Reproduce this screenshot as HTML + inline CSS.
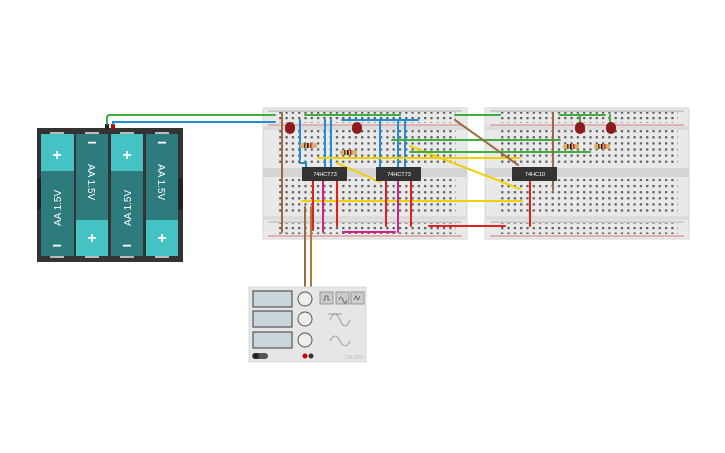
<!DOCTYPE html>
<html><head><meta charset="utf-8"><style>
html,body{margin:0;padding:0;background:#fff;width:725px;height:453px;overflow:hidden}
text{font-family:"Liberation Sans",sans-serif}
</style></head><body>
<svg width="725" height="453" viewBox="0 0 725 453" xmlns="http://www.w3.org/2000/svg">
<defs>
<pattern id="h" x="0" y="0" width="6.3" height="6.1" patternUnits="userSpaceOnUse"><rect x="2" y="2" width="2.2" height="2.2" fill="#5a5a5a"/></pattern>
<pattern id="hr" x="0" y="0" width="6.3" height="5.5" patternUnits="userSpaceOnUse"><rect x="2" y="1.5" width="2.2" height="2.2" fill="#5a5a5a"/></pattern>
</defs>

<rect x="37" y="128" width="146" height="134" fill="#333"/>
<rect x="37" y="178" width="5" height="32" rx="3" fill="#222"/>
<rect x="178" y="178" width="5" height="32" rx="3" fill="#222"/>
<g>
<rect x="41" y="134" width="33" height="122" fill="#2e7b7e"/><rect x="41" y="134" width="33" height="37" fill="#45c2c3"/>
<rect x="76" y="134" width="32" height="122" fill="#2e7b7e"/><rect x="76" y="220" width="32" height="36" fill="#45c2c3"/>
<rect x="111" y="134" width="32" height="122" fill="#2e7b7e"/><rect x="111" y="134" width="32" height="37" fill="#45c2c3"/>
<rect x="146" y="134" width="32" height="122" fill="#2e7b7e"/><rect x="146" y="220" width="32" height="36" fill="#45c2c3"/>
</g>
<g fill="#bbb"><rect x="50" y="132" width="14" height="2"/><rect x="85" y="132" width="14" height="2"/><rect x="120" y="132" width="14" height="2"/><rect x="155" y="132" width="14" height="2"/>
<rect x="50" y="256" width="14" height="2"/><rect x="85" y="256" width="14" height="2"/><rect x="120" y="256" width="14" height="2"/><rect x="155" y="256" width="14" height="2"/></g>
<g fill="#fff" font-size="16" font-weight="bold" text-anchor="middle">
<text x="57" y="160">+</text><text x="57" y="251">−</text>
<text x="92" y="148">−</text><text x="92" y="243">+</text>
<text x="127" y="160">+</text><text x="127" y="251">−</text>
<text x="162" y="148">−</text><text x="162" y="243">+</text>
</g>
<g fill="#fff" font-size="10">
<text transform="translate(61,226) rotate(-90)">AA 1.5V</text>
<text transform="translate(88,164) rotate(90)">AA 1.5V</text>
<text transform="translate(131,226) rotate(-90)">AA 1.5V</text>
<text transform="translate(158,164) rotate(90)">AA 1.5V</text>
</g>
<rect x="105" y="124" width="4" height="5" fill="#222"/><rect x="111" y="124" width="4" height="5" fill="#c00"/>

<g id="bb">
<rect x="263" y="108" width="204" height="131" fill="#e9e9e9" stroke="#d6d6d6"/>
<rect x="263" y="126" width="204" height="4" fill="#dcdcdc"/>
<rect x="263" y="168" width="204" height="9" fill="#d4d4d4"/>
<rect x="263" y="216" width="204" height="4" fill="#dcdcdc"/>
<line x1="268" y1="111" x2="462" y2="111" stroke="#999" stroke-width="0.8"/>
<line x1="268" y1="125" x2="462" y2="125" stroke="#c55" stroke-width="0.8"/>
<line x1="268" y1="222" x2="462" y2="222" stroke="#999" stroke-width="0.8"/>
<line x1="268" y1="236" x2="462" y2="236" stroke="#c55" stroke-width="0.8"/>
<rect x="276" y="112" width="180" height="11" fill="url(#hr)"/>
<rect x="276" y="130" width="180" height="36" fill="url(#h)"/>
<rect x="276" y="179" width="180" height="36" fill="url(#h)"/>
<rect x="276" y="223" width="180" height="11" fill="url(#hr)"/>
</g>
<use href="#bb" x="222"/>

<g fill="none" stroke-width="2" stroke-linecap="round">
<path d="M107 124 V118 Q107 115 110 115 H275" stroke="#3fae3f"/>
<path d="M113 124 V122 H275" stroke="#1e8fd6"/>
<path d="M305 115 H400" stroke="#3fae3f"/>
<path d="M342 120 H418" stroke="#1e8fd6"/>
<path d="M455 115 H500" stroke="#3fae3f"/>
<path d="M300 120 V160" stroke="#1e8fd6"/>
<path d="M325 120 V167" stroke="#1e8fd6"/><path d="M331 120 V167" stroke="#1e8fd6"/>
<path d="M380 120 V167" stroke="#1e8fd6"/><path d="M398 120 V167" stroke="#1e8fd6"/><path d="M405 120 V167" stroke="#1e8fd6"/>
<path d="M300 163 H306 V167" stroke="#1e8fd6"/>
<path d="M318 158 H520" stroke="#f0d000"/>
<path d="M337 163 L380 182" stroke="#f0d000"/>
<path d="M302 201 H522" stroke="#f0d000"/>
<path d="M410 146 L520 189" stroke="#f0d000"/>
<path d="M392 140 H560" stroke="#3fae3f"/>
<path d="M410 152 H590" stroke="#3fae3f"/>
<path d="M560 115 H605" stroke="#3fae3f"/>
<path d="M580 115 V125" stroke="#3fae3f"/><path d="M610 115 V125" stroke="#3fae3f"/>
<path d="M313 181 V230" stroke="#e02020"/><path d="M337 181 V226" stroke="#e02020"/>
<path d="M386 181 V226" stroke="#e02020"/><path d="M411 181 V226" stroke="#e02020"/>
<path d="M429 226 H505" stroke="#e02020"/><path d="M530 181 V226" stroke="#e02020"/>
<path d="M323 181 V232" stroke="#d0208a"/><path d="M398 181 V232" stroke="#d0208a"/>
<path d="M343 232 H395" stroke="#d0208a"/>
<path d="M282 113 V232" stroke="#9a6a40"/>
<path d="M455 120 L518 165" stroke="#9a6a40"/>
<path d="M553 113 V190" stroke="#9a6a40"/>
<path d="M305 207 V356" stroke="#9a6a40"/><path d="M311 207 V356" stroke="#b07840"/>
</g>

<g fill="#8e1b1b">
<rect x="285" y="122" width="10" height="12" rx="5"/><rect x="352" y="122" width="10" height="12" rx="5"/>
<rect x="575" y="122" width="10" height="12" rx="5"/><rect x="606" y="122" width="10" height="12" rx="5"/>
</g>
<g>
<rect x="300" y="143" width="17" height="5" rx="2" fill="#d8b070"/>
<rect x="340" y="150" width="17" height="5" rx="2" fill="#d8b070"/>
<rect x="563" y="144" width="16" height="5" rx="2" fill="#d8b070"/>
<rect x="594" y="144" width="16" height="5" rx="2" fill="#d8b070"/>
<g fill="#6b3a1a"><rect x="304" y="143" width="1.5" height="5"/><rect x="344" y="150" width="1.5" height="5"/><rect x="567" y="144" width="1.5" height="5"/><rect x="598" y="144" width="1.5" height="5"/></g>
<g fill="#111"><rect x="307" y="143" width="1.5" height="5"/><rect x="347" y="150" width="1.5" height="5"/><rect x="570" y="144" width="1.5" height="5"/><rect x="601" y="144" width="1.5" height="5"/></g>
<g fill="#d22"><rect x="310" y="143" width="1.5" height="5"/><rect x="350" y="150" width="1.5" height="5"/><rect x="573" y="144" width="1.5" height="5"/><rect x="604" y="144" width="1.5" height="5"/></g>
</g>

<g fill="#333">
<rect x="302" y="167" width="45" height="14"/><rect x="376" y="167" width="45" height="14"/><rect x="512" y="167" width="45" height="14"/>
</g>
<g fill="#fff" font-size="5.5" text-anchor="middle">
<text x="325" y="176">74HCT73</text><text x="399" y="176">74HCT73</text><text x="535" y="176">74HC10</text>
</g>

<rect x="249" y="287" width="117" height="75" fill="#e6e6e6" stroke="#d8d8d8"/>
<g fill="#c9d6dc" stroke="#555" stroke-width="1.2">
<rect x="253" y="291" width="39" height="16"/><rect x="253" y="311" width="39" height="16"/><rect x="253" y="332" width="39" height="16"/>
</g>
<g fill="#eee" stroke="#555" stroke-width="1">
<circle cx="305" cy="299" r="7"/><circle cx="305" cy="319" r="7"/><circle cx="305" cy="340" r="7"/>
</g>
<g fill="#ccc" stroke="#888" stroke-width="0.8">
<rect x="320" y="292" width="13" height="12"/><rect x="336" y="292" width="13" height="12"/><rect x="351" y="292" width="13" height="12"/>
</g>
<g fill="none" stroke="#555" stroke-width="0.8">
<path d="M323 300 h2 v-4 h3 v4 h2"/><path d="M339 300 q2 -6 4 0 q2 6 4 0"/><path d="M354 300 l2 -4 l2 4 l2 -4"/>
<path d="M330 320 q5 -12 10 0 q5 12 10 0" stroke="#888"/><path d="M328 314 h14" stroke="#888"/>
<path d="M330 341 q5 -10 10 0 q5 10 10 0" stroke="#888"/>
</g>
<rect x="252" y="353" width="16" height="6" rx="3" fill="#555"/><circle cx="256" cy="356" r="3" fill="#222"/>
<circle cx="305" cy="356" r="2.5" fill="#c00"/><circle cx="311" cy="356" r="2.5" fill="#333"/>
<text x="345" y="359" font-size="5" fill="#bbb">ON OFF</text>
</svg>
</body></html>
